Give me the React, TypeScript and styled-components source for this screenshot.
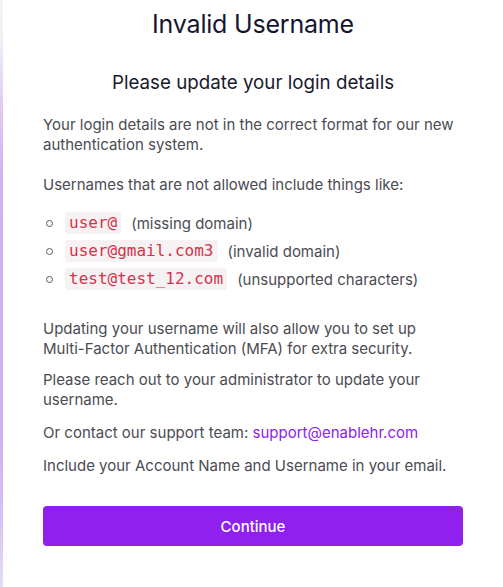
import React from "react";
import styled, { createGlobalStyle } from "styled-components";

const Global = createGlobalStyle`
  html, body { margin: 0; padding: 0; background: #ffffff; }
  body { font-family: Inter, "Noto Sans", sans-serif; -webkit-font-smoothing: antialiased; }
  * { box-sizing: border-box; }
`;

const Page = styled.div`
  display: flex;
  width: 503px;
  min-height: 587px;
  background: #ffffff;
`;

const Strip = styled.div`
  width: 3px;
  flex: none;
  background: linear-gradient(
    to bottom,
    #f4f4f4 0px,
    #f1eef6 40px,
    #ddc9f3 110px,
    #cdb3ef 180px,
    #cbb1ee 430px,
    #d6c2f2 520px,
    #e6dcf6 587px
  );
`;

const Panel = styled.main`
  flex: 1;
  display: flex;
  flex-direction: column;
  padding: 8px 40px 0 40px;
  color: #4b4b52;
`;

const Title = styled.h1`
  margin: 0;
  font-size: 25px;
  line-height: 32px;
  font-weight: 400;
  color: #161632;
  text-align: center;
  letter-spacing: -0.2px;
`;

const Subtitle = styled.h2`
  margin: 31px 0 0;
  font-size: 18.75px;
  line-height: 24px;
  font-weight: 400;
  color: #1a1a2e;
  text-align: center;
`;

const Para = styled.p<{ $gap: number }>`
  margin: ${(p) => p.$gap}px 0 0;
  font-size: 15px;
  line-height: 20px;
  color: #4b4b52;
`;

const NoBreak = styled.span`
  white-space: nowrap;
`;

const List = styled.ul`
  list-style: none;
  margin: 14px 0 0;
  padding: 0;
  display: flex;
  flex-direction: column;
`;

const Item = styled.li`
  display: flex;
  align-items: center;
  height: 28px;
  font-size: 15px;
  color: #4b4b52;
  &::before {
    content: "";
    width: 5px;
    height: 5px;
    border: 1px solid #5a5a60;
    border-radius: 50%;
    margin-left: 3px;
    margin-right: 12px;
    flex: none;
  }
`;

const Code = styled.code`
  font-family: "DejaVu Sans Mono", "Liberation Mono", monospace;
  font-size: 16px;
  line-height: 22px;
  color: #d4334b;
  background: #f6f1f2;
  border-radius: 3px;
  padding: 0 4px;
  margin-right: 10px;
`;

const Link = styled.a`
  color: #8d22ea;
  text-decoration: none;
`;

const Button = styled.button`
  margin-top: 30px;
  height: 40px;
  width: 100%;
  border: none;
  border-radius: 4px;
  background: #9020ee;
  color: #ffffff;
  font-family: Inter, "Noto Sans", sans-serif;
  font-size: 15px;
  font-weight: 500;
  cursor: pointer;
`;

const items = [
  { code: "user@", note: "(missing domain)" },
  { code: "user@gmail.com3", note: "(invalid domain)" },
  { code: "test@test_12.com", note: "(unsupported characters)" },
];

export default function App() {
  return (
    <>
      <Global />
      <Page>
        <Strip />
        <Panel>
          <Title>Invalid Username</Title>
          <Subtitle>Please update your login details</Subtitle>
          <Para $gap={20}>
            Your login details are not in the correct format for our new authentication system.
          </Para>
          <Para $gap={20}>Usernames that are not allowed include things like:</Para>
          <List>
            {items.map((it) => (
              <Item key={it.code}>
                <Code>{it.code}</Code>
                <span>{it.note}</span>
              </Item>
            ))}
          </List>
          <Para $gap={26}>
            Updating your username will also allow you to set up <NoBreak>Multi-Factor</NoBreak> Authentication (MFA) for extra security.
          </Para>
          <Para $gap={11}>Please reach out to your administrator to update your username.</Para>
          <Para $gap={13}>
            Or contact our support team: <Link href="#">support@enablehr.com</Link>
          </Para>
          <Para $gap={13}>Include your Account Name and Username in your email.</Para>
          <Button>Continue</Button>
        </Panel>
      </Page>
    </>
  );
}
